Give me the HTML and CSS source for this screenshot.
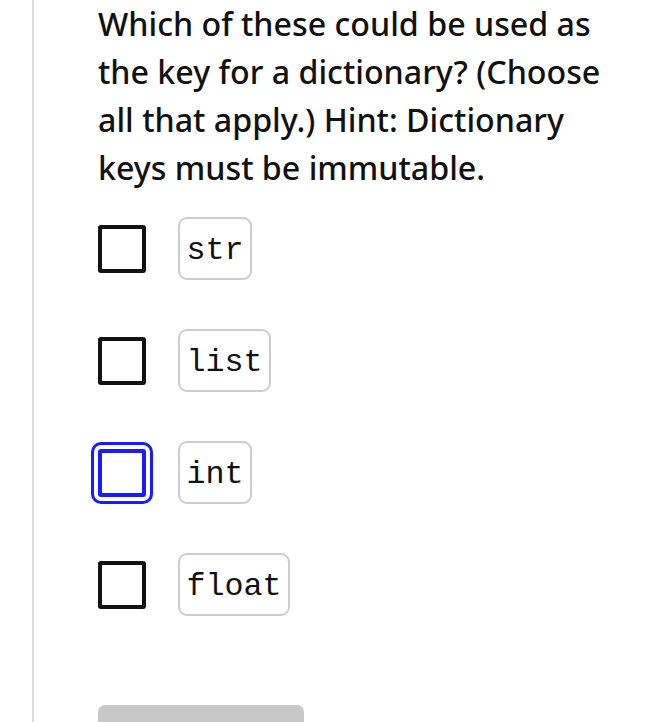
FILE: index.html
```html
<!DOCTYPE html>
<html>
<head>
<meta charset="utf-8">
<link rel="stylesheet" href="styles.css">
</head>
<body>
<div class="page">
  <main class="panel">
    <p class="question">Which of these could be used as the key for a dictionary? (Choose all that apply.) Hint: Dictionary keys must be immutable.</p>
    <div class="options">
      <label class="option"><span class="box"></span><code class="chip">str</code></label>
      <label class="option"><span class="box"></span><code class="chip">list</code></label>
      <label class="option"><span class="box focus"></span><code class="chip">int</code></label>
      <label class="option"><span class="box"></span><code class="chip">float</code></label>
    </div>
    <div class="submit"></div>
  </main>
</div>
</body>
</html>
```

FILE: styles.css
```css
html, body {
  margin: 0;
  padding: 0;
  background: #ffffff;
}
.page {
  padding-left: 32px;
  height: 722px;
  overflow: hidden;
}
.panel {
  border-left: 2px solid #dcdcdc;
  padding-left: 64px;
  height: 100%;
}
.question {
  margin: 0;
  width: 520px;
  font-family: "Noto Sans", "Open Sans", sans-serif;
  font-size: 32.2px;
  font-weight: 500;
  line-height: 48px;
  color: #111111;
}
.options {
  margin-top: 25px;
  display: flex;
  flex-direction: column;
  gap: 49px;
}
.option {
  display: flex;
  align-items: center;
  gap: 32px;
}
.box {
  box-sizing: border-box;
  width: 48px;
  height: 48px;
  border: 4px solid #111111;
  border-radius: 3px;
  background: #fff;
}
.box.focus {
  border-color: #1a1aff;
  outline: 3px solid #1a1aff;
  outline-offset: 4px;
  border-radius: 3px;
}
.chip {
  box-sizing: border-box;
  height: 63px;
  display: flex;
  align-items: center;
  padding: 4px 6.5px 0;
  border: 2px solid #cccccc;
  border-radius: 9px;
  font-family: "Liberation Mono", monospace;
  font-size: 31.7px;
  color: #111111;
}
.submit {
  margin-top: 89px;
  width: 206px;
  height: 60px;
  background: #c8c8c8;
  border-radius: 7px;
}
```
